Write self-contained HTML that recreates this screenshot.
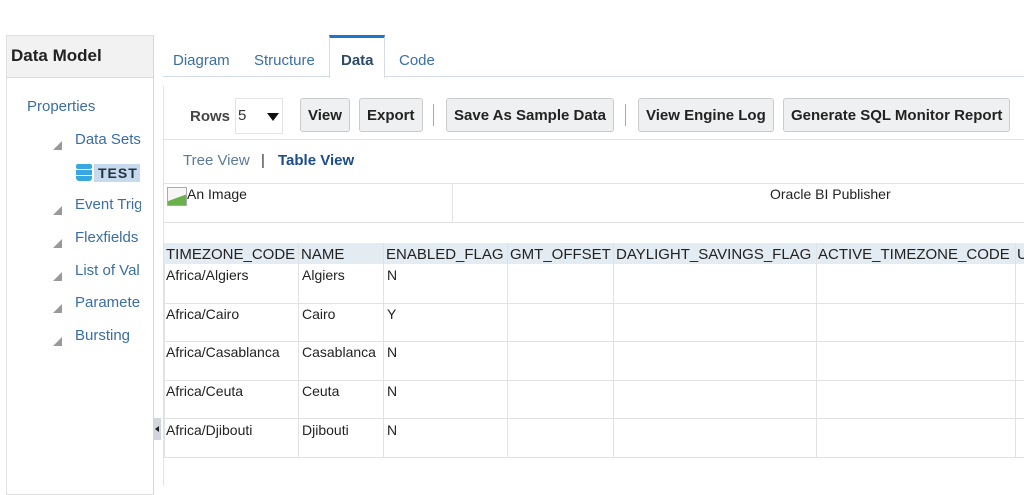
<!DOCTYPE html>
<html><head><style>
*{margin:0;padding:0;box-sizing:border-box}
body{width:1024px;height:483px;background:#fff;font-family:"Liberation Sans",Arial,sans-serif;font-size:14px;color:#333;position:relative;overflow:hidden}
.a{position:absolute}
.lp{left:6px;top:35px;width:148px;height:460px;border:1px solid #e0e0e0;border-right:1px solid #d6d6d6}
.lh{left:7px;top:36px;width:146px;height:42px;background:#f2f2f2;border-bottom:1px solid #ddd;font-weight:bold;font-size:17px;color:#222;padding:10px 0 0 4px}
.nav{color:#3a6ea5;font-size:15px}
.tri{width:0;height:0;border-left:9px solid transparent;border-bottom:9px solid #999}
.tab{top:51px;font-size:15px;color:#3a6ea5}
.btn{top:98px;height:34px;border:1px solid #ccc;border-radius:3px;background:#eef0f2;font-weight:bold;font-size:15px;color:#222;padding:8px 7px 0;white-space:nowrap}
.sep{top:104px;width:1px;height:22px;background:#aaa}
.hl{height:1px;background:#e2e2e2}
.vl{width:1px;background:#e2e2e2}
.c{font-size:14px;color:#222;white-space:nowrap}
</style></head><body>
<div class="a lp"></div>
<div class="a lh">Data Model</div>
<div class="a nav" style="left:27px;top:98px">Properties</div>
<div class="a tri" style="left:53px;top:141px"></div><div class="a nav" style="left:75px;top:131px">Data Sets</div>
<div class="a" style="left:76px;top:164px;width:16px;height:18px">
<div style="height:5px;background:#3aa8e0;border-radius:2px;margin-bottom:1px"></div><div style="height:5px;background:#3aa8e0;margin-bottom:1px"></div><div style="height:5px;background:#3aa8e0;border-radius:0 0 3px 3px"></div></div>
<div class="a" style="left:94px;top:164px;width:46px;height:18px;background:#c7d9ec;font-weight:bold;color:#234;font-size:14px;padding:1px 0 0 4px;letter-spacing:1px">TEST</div>
<div class="a tri" style="left:53px;top:206px"></div><div class="a nav" style="left:75px;top:196px">Event Trig</div>
<div class="a tri" style="left:53px;top:239px"></div><div class="a nav" style="left:75px;top:229px">Flexfields</div>
<div class="a tri" style="left:53px;top:272px"></div><div class="a nav" style="left:75px;top:262px">List of Val</div>
<div class="a tri" style="left:53px;top:304px"></div><div class="a nav" style="left:75px;top:294px">Paramete</div>
<div class="a tri" style="left:53px;top:337px"></div><div class="a nav" style="left:75px;top:327px">Bursting</div>
<div class="a" style="left:141px;top:160px;width:12px;height:160px;background:#fff"></div>
<div class="a" style="left:153px;top:418px;width:8px;height:22px;background:#cfd6dd"></div>
<div class="a" style="left:155px;top:426px;width:0;height:0;border-top:3px solid transparent;border-bottom:3px solid transparent;border-right:4px solid #222"></div>

<div class="a tab" style="left:173px;top:52px">Diagram</div>
<div class="a tab" style="left:254px;top:52px">Structure</div>
<div class="a" style="left:329px;top:35px;width:56px;height:43px;background:#fff;border:1px solid #d4dde6;border-top:3px solid #1f74c7;border-bottom:none;z-index:2;font-weight:bold;font-size:15px;color:#2c4a6a;padding:14px 0 0 11px">Data</div>
<div class="a tab" style="left:399px;top:52px">Code</div>
<div class="a" style="left:163px;top:76px;width:861px;height:1px;background:#d4dde6"></div>

<div class="a vl" style="left:163px;top:86px;height:400px"></div>
<div class="a" style="left:190px;top:108px;font-weight:bold;font-size:15px;color:#444">Rows</div>
<div class="a" style="left:235px;top:98px;width:48px;height:36px;border:1px solid #e4e4e4;font-size:15px;padding:8px 0 0 2px">5</div>
<div class="a" style="left:267px;top:113px;border-left:6px solid transparent;border-right:6px solid transparent;border-top:8px solid #111"></div>
<div class="a btn" style="left:300px">View</div>
<div class="a btn" style="left:359px">Export</div>
<div class="a sep" style="left:433px"></div>
<div class="a btn" style="left:446px">Save As Sample Data</div>
<div class="a sep" style="left:625px"></div>
<div class="a btn" style="left:638px">View Engine Log</div>
<div class="a btn" style="left:783px">Generate SQL Monitor Report</div>
<div class="a hl" style="left:163px;top:139px;width:861px"></div>
<div class="a" style="left:183px;top:152px;font-size:15px;color:#5b7a99">Tree View</div>
<div class="a" style="left:261px;top:152px;font-size:15px;color:#333">|</div>
<div class="a" style="left:278px;top:152px;font-size:15px;font-weight:bold;color:#1b4c8c">Table View</div>
<div class="a hl" style="left:163px;top:183px;width:861px"></div>
<div class="a" style="left:167px;top:187px;width:20px;height:19px;border:1px solid #aaa;background:linear-gradient(160deg,#f6f6f6 55%,#6ab04c 56%)"></div>
<div class="a c" style="left:187px;top:186px">An Image</div>
<div class="a vl" style="left:452px;top:183px;height:39px"></div>
<div class="a c" style="left:770px;top:186px">Oracle BI Publisher</div>
<div class="a hl" style="left:163px;top:222px;width:861px"></div>

<div class="a" style="left:164px;top:243px;width:860px;height:21px;background:#e3ebf3"></div>
<div class="a c" style="left:166px;top:246px;font-size:15px">TIMEZONE_CODE</div>
<div class="a c" style="left:301px;top:246px;font-size:15px">NAME</div>
<div class="a c" style="left:386px;top:246px;font-size:15px">ENABLED_FLAG</div>
<div class="a c" style="left:510px;top:246px;font-size:15px">GMT_OFFSET</div>
<div class="a c" style="left:616px;top:246px;font-size:15px">DAYLIGHT_SAVINGS_FLAG</div>
<div class="a c" style="left:818px;top:246px;font-size:15px">ACTIVE_TIMEZONE_CODE</div>
<div class="a c" style="left:1017px;top:246px;font-size:15px">U</div>
<div class="a" style="left:164px;top:264px;width:1px;height:194px;background:#e2e2e2"></div>
<div class="a vl" style="left:298px;top:243px;height:215px"></div>
<div class="a vl" style="left:383px;top:243px;height:215px"></div>
<div class="a vl" style="left:507px;top:243px;height:215px"></div>
<div class="a vl" style="left:613px;top:243px;height:215px"></div>
<div class="a vl" style="left:816px;top:243px;height:215px"></div>
<div class="a vl" style="left:1015px;top:243px;height:215px"></div>
<div class="a hl" style="left:164px;top:303px;width:860px"></div>
<div class="a hl" style="left:164px;top:341px;width:860px"></div>
<div class="a hl" style="left:164px;top:380px;width:860px"></div>
<div class="a hl" style="left:164px;top:418px;width:860px"></div>
<div class="a hl" style="left:164px;top:457px;width:860px"></div>

<div class="a c" style="left:166px;top:267px">Africa/Algiers</div><div class="a c" style="left:302px;top:267px">Algiers</div><div class="a c" style="left:387px;top:267px">N</div>
<div class="a c" style="left:166px;top:306px">Africa/Cairo</div><div class="a c" style="left:302px;top:306px">Cairo</div><div class="a c" style="left:387px;top:306px">Y</div>
<div class="a c" style="left:166px;top:344px">Africa/Casablanca</div><div class="a c" style="left:302px;top:344px">Casablanca</div><div class="a c" style="left:387px;top:344px">N</div>
<div class="a c" style="left:166px;top:383px">Africa/Ceuta</div><div class="a c" style="left:302px;top:383px">Ceuta</div><div class="a c" style="left:387px;top:383px">N</div>
<div class="a c" style="left:166px;top:422px">Africa/Djibouti</div><div class="a c" style="left:302px;top:422px">Djibouti</div><div class="a c" style="left:387px;top:422px">N</div>
</body></html>
